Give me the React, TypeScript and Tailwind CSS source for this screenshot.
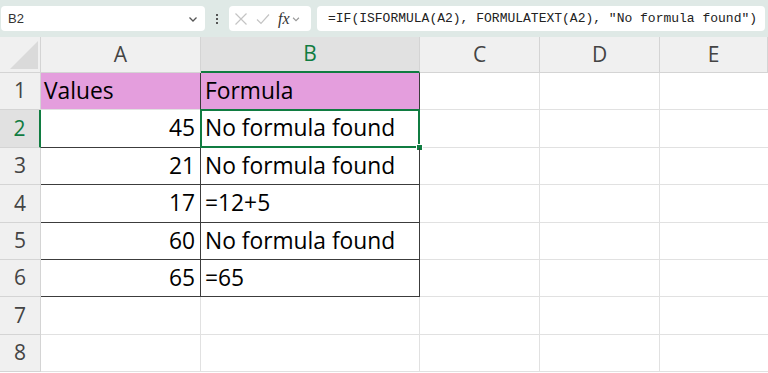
import React from 'react';

const font = { fontFamily: '"Open Sans", Lato, sans-serif' };

type Row = { n: number; a?: string; b?: string };

const rows: Row[] = [
  { n: 1, a: 'Values', b: 'Formula' },
  { n: 2, a: '45', b: 'No formula found' },
  { n: 3, a: '21', b: 'No formula found' },
  { n: 4, a: '17', b: '=12+5' },
  { n: 5, a: '60', b: 'No formula found' },
  { n: 6, a: '65', b: '=65' },
  { n: 7 },
  { n: 8 },
];

function Chevron({ className }: { className?: string }) {
  return (
    <svg viewBox="0 0 12 12" className={className} fill="none" stroke="currentColor" strokeWidth="1.3">
      <path d="M2.5 4.5 6 8l3.5-3.5" />
    </svg>
  );
}

function FormulaBar() {
  return (
    <div className="flex h-[37px] items-center gap-[6px] bg-[#dfe9e6] pl-[1px] pr-[3px]">
      <div className="flex h-[25px] w-[204px] shrink-0 items-center justify-between rounded-[4px] bg-white pl-[7px] pr-[6px] text-[13px] text-[#333]" style={{ fontFamily: '"Liberation Sans", sans-serif' }}>
        <span>B2</span>
        <Chevron className="h-[12px] w-[12px] text-[#555]" />
      </div>
      <div className="flex w-[12px] shrink-0 flex-col items-center gap-[2px]">
        <span className="h-[2px] w-[2px] bg-[#555]" />
        <span className="h-[2px] w-[2px] bg-[#555]" />
        <span className="h-[2px] w-[2px] bg-[#555]" />
      </div>
      <div className="flex h-[25px] w-[82px] shrink-0 items-center gap-[8px] rounded-[4px] bg-white pl-[5px]">
        <svg viewBox="0 0 14 14" className="h-[14px] w-[14px]" fill="none" stroke="#c4c4c4" strokeWidth="1.2">
          <path d="M1.5 1.5 12.5 12.5M12.5 1.5 1.5 12.5" />
        </svg>
        <svg viewBox="0 0 14 14" className="h-[14px] w-[14px]" fill="none" stroke="#c4c4c4" strokeWidth="1.2">
          <path d="M1 7.5 5 11.5 13 2.5" />
        </svg>
        <div className="flex items-center">
          <span className="text-[16px] italic leading-none text-[#333]" style={{ fontFamily: '"Liberation Serif", serif' }}>
            fx
          </span>
          <Chevron className="ml-[1px] h-[10px] w-[10px] text-[#999]" />
        </div>
      </div>
      <div className="flex h-[25px] min-w-0 flex-1 items-center whitespace-nowrap rounded-[4px] bg-white pl-[11px] text-[13px] text-[#222]" style={{ fontFamily: '"Liberation Mono", monospace' }}>
        =IF(ISFORMULA(A2), FORMULATEXT(A2), "No formula found")
      </div>
    </div>
  );
}

function HeaderRow() {
  const cols = [
    { l: 'A', w: 'w-[160px]', sel: false },
    { l: 'B', w: 'w-[219px]', sel: true },
    { l: 'C', w: 'w-[120px]', sel: false },
    { l: 'D', w: 'w-[120px]', sel: false },
    { l: 'E', w: 'flex-1', sel: false },
  ];
  return (
    <div className="flex h-[36px]">
      <div className="flex w-[41px] items-end justify-start border-r border-b border-[#d4d4d4] bg-[#f0f0f0] pb-[3px] pl-[10px]">
        <svg viewBox="0 0 28 28" className="h-[28px] w-[28px]">
          <path d="M28 0V28H0Z" fill="#dadada" />
        </svg>
      </div>
      {cols.map((c) =>
        c.sel ? (
          <div key={c.l} className={`${c.w} flex items-center justify-center border-r border-[#d4d4d4] border-b-2 border-b-[#107c41] bg-[#e1e1e1] text-[21px] text-[#107c41]`}>
            {c.l}
          </div>
        ) : (
          <div key={c.l} className={`${c.w} flex items-center justify-center border-r border-b border-[#d4d4d4] bg-[#f0f0f0] text-[21px] text-[#444]`}>
            {c.l}
          </div>
        )
      )}
    </div>
  );
}

function DataRow({ r }: { r: Row }) {
  const inTable = r.n <= 6;
  const selRow = r.n === 2;
  const dark = r.n >= 2 && r.n <= 6;
  return (
    <div className="flex h-[37.4px]">
      <div
        className={`flex w-[41px] items-center justify-center border-b border-[#d4d4d4] text-[21px] ${
          selRow ? 'border-r-2 border-r-[#107c41] bg-[#e1e1e1] text-[#107c41]' : 'border-r border-r-[#d4d4d4] bg-[#f0f0f0] text-[#444]'
        }`}
      >
        {r.n}
      </div>
      <div
        className={`flex w-[160px] items-center text-[22.8px] text-black ${
          r.n === 1 ? 'justify-start bg-[#e49edd] pl-[3px]' : 'justify-end pr-[5px]'
        } ${dark ? 'border-b border-[#3c3c3c]' : 'border-b border-[#e1e1e1]'} ${inTable ? 'border-r border-r-[#3c3c3c]' : 'border-r border-r-[#e1e1e1]'}`}
      >
        {r.a}
      </div>
      <div
        className={`relative flex w-[219px] items-center pl-[4px] text-[22.8px] text-black ${r.n === 1 ? 'bg-[#e49edd]' : ''} ${
          dark ? 'border-b border-[#3c3c3c]' : 'border-b border-[#e1e1e1]'
        } ${inTable ? 'border-r border-r-[#3c3c3c]' : 'border-r border-r-[#e1e1e1]'}`}
      >
        {r.b}
        {selRow && (
          <>
            <div className="pointer-events-none absolute -top-[1px] -bottom-[1px] -left-[1px] -right-[1px] border-2 border-[#107c41]" />
            <div className="absolute -right-[4px] -bottom-[4px] h-[7px] w-[7px] border border-white bg-[#107c41]" />
          </>
        )}
      </div>
      <div className="w-[120px] border-r border-b border-[#e1e1e1]" />
      <div className="w-[120px] border-r border-b border-[#e1e1e1]" />
      <div className="flex-1 border-b border-[#e1e1e1]" />
    </div>
  );
}

export default function App() {
  return (
    <div className="h-[373px] w-[768px] overflow-hidden bg-white" style={font}>
      <FormulaBar />
      <HeaderRow />
      {rows.map((r) => (
        <DataRow key={r.n} r={r} />
      ))}
    </div>
  );
}
